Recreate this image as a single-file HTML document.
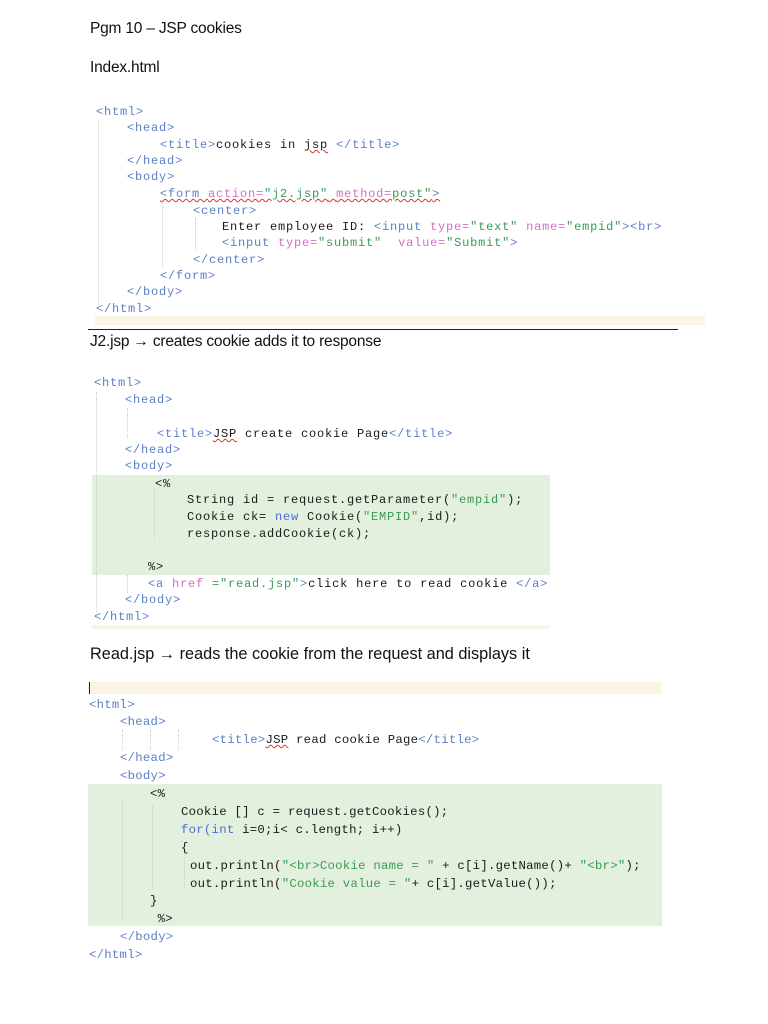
<!DOCTYPE html>
<html><head><meta charset="utf-8"><style>
body{margin:0;width:768px;height:1024px;background:#fff;position:relative;overflow:hidden;font-family:"Liberation Sans",sans-serif}
.h{position:absolute;left:90px;font-size:15.5px;color:#111;white-space:nowrap;letter-spacing:-0.2px}
.c{position:absolute;font-family:"Liberation Mono",monospace;font-size:12px;letter-spacing:0.8px;white-space:pre;color:#1a1a1a;line-height:14px}
.c3{letter-spacing:0.26px;font-size:12.3px}
.t{color:#5b80c8}.a{color:#d36fc6}.s{color:#3a9a55}.k{color:#4b6fd8}
.bx{position:absolute}
.u{text-decoration:underline wavy #d33;text-decoration-thickness:1px}
.g{position:absolute;border-left:1px dotted #ccc}
</style></head><body>
<div class="h" style="top:20px">Pgm 10 – JSP cookies</div>
<div class="h" style="top:59px">Index.html</div>

<div class="g" style="left:98px;top:120px;height:185px"></div>
<div class="g" style="left:162px;top:203px;height:65px"></div>
<div class="g" style="left:195px;top:218px;height:32px"></div>
<div class="c" style="left:96px;top:105px"><span class="t">&lt;html&gt;</span></div>
<div class="c" style="left:127px;top:121px"><span class="t">&lt;head&gt;</span></div>
<div class="c" style="left:160px;top:138px"><span class="t">&lt;title&gt;</span>cookies in <span class="u">jsp</span> <span class="t">&lt;/title&gt;</span></div>
<div class="c" style="left:127px;top:154px"><span class="t">&lt;/head&gt;</span></div>
<div class="c" style="left:127px;top:170px"><span class="t">&lt;body&gt;</span></div>
<div class="c" style="left:160px;top:187px"><span class="u"><span class="t">&lt;form </span><span class="a">action=</span><span class="s">"j2.jsp"</span> <span class="a">method=</span><span class="s">post"</span><span class="t">&gt;</span></span></div>
<div class="c" style="left:193px;top:204px"><span class="t">&lt;center&gt;</span></div>
<div class="c" style="left:222px;top:220px">Enter employee ID: <span class="t">&lt;input </span><span class="a">type=</span><span class="s">"text"</span> <span class="a">name=</span><span class="s">"empid"</span><span class="t">&gt;&lt;br&gt;</span></div>
<div class="c" style="left:222px;top:236px"><span class="t">&lt;input </span><span class="a">type=</span><span class="s">"submit"</span>  <span class="a">value=</span><span class="s">"Submit"</span><span class="t">&gt;</span></div>
<div class="c" style="left:193px;top:253px"><span class="t">&lt;/center&gt;</span></div>
<div class="c" style="left:160px;top:269px"><span class="t">&lt;/form&gt;</span></div>
<div class="c" style="left:127px;top:285px"><span class="t">&lt;/body&gt;</span></div>
<div class="c" style="left:96px;top:302px"><span class="t">&lt;/html&gt;</span></div>
<div class="bx" style="left:95px;top:316px;width:610px;height:9px;background:#fbf5e6"></div>
<div class="bx" style="left:88px;top:329px;width:590px;height:1px;background:#222"></div>

<div class="h" style="top:333px">J2.jsp <b>→</b> creates cookie adds it to response</div>
<div class="bx" style="left:92px;top:475px;width:458px;height:100px;background:#e3f0dd"></div>
<div class="g" style="left:96px;top:392px;height:220px"></div>
<div class="g" style="left:127px;top:408px;height:30px"></div>
<div class="g" style="left:154px;top:490px;height:50px"></div>
<div class="g" style="left:127px;top:575px;height:18px"></div>
<div class="c" style="left:94px;top:376px"><span class="t">&lt;html&gt;</span></div>
<div class="c" style="left:125px;top:393px"><span class="t">&lt;head&gt;</span></div>
<div class="c" style="left:157px;top:427px"><span class="t">&lt;title&gt;</span><span class="u">JSP</span> create cookie Page<span class="t">&lt;/title&gt;</span></div>
<div class="c" style="left:125px;top:443px"><span class="t">&lt;/head&gt;</span></div>
<div class="c" style="left:125px;top:459px"><span class="t">&lt;body&gt;</span></div>
<div class="c" style="left:155px;top:477px">&lt;%</div>
<div class="c" style="left:187px;top:493px">String id = request.getParameter(<span class="s">"empid"</span>);</div>
<div class="c" style="left:187px;top:510px">Cookie ck= <span class="k">new</span> Cookie(<span class="s">"EMPID"</span>,id);</div>
<div class="c" style="left:187px;top:527px">response.addCookie(ck);</div>
<div class="c" style="left:148px;top:560px">%&gt;</div>
<div class="c" style="left:148px;top:577px"><span class="t">&lt;a </span><span class="a">href </span><span class="s">="read.jsp"</span><span class="t">&gt;</span>click here to read cookie <span class="t">&lt;/a&gt;</span></div>
<div class="c" style="left:125px;top:593px"><span class="t">&lt;/body&gt;</span></div>
<div class="c" style="left:94px;top:610px"><span class="t">&lt;/html&gt;</span></div>
<div class="bx" style="left:92px;top:625px;width:458px;height:4px;background:#fbf5e6"></div>

<div class="h" style="top:645px;font-size:16.3px;letter-spacing:0px">Read.jsp <b>→</b> reads the cookie from the request and displays it</div>
<div class="bx" style="left:88px;top:682px;width:574px;height:12px;background:#fbf5e6"></div>
<div class="bx" style="left:89px;top:682px;width:1px;height:12px;background:#222"></div>
<div class="bx" style="left:88px;top:784px;width:574px;height:142px;background:#e3f0dd"></div>
<div class="g" style="left:122px;top:730px;height:20px"></div>
<div class="g" style="left:150px;top:730px;height:20px"></div>
<div class="g" style="left:178px;top:730px;height:20px"></div>
<div class="g" style="left:122px;top:800px;height:120px"></div>
<div class="g" style="left:152px;top:805px;height:85px"></div>
<div class="g" style="left:184px;top:855px;height:35px"></div>
<div class="c c3" style="left:89px;top:698px"><span class="t">&lt;html&gt;</span></div>
<div class="c c3" style="left:120px;top:715px"><span class="t">&lt;head&gt;</span></div>
<div class="c c3" style="left:212px;top:733px"><span class="t">&lt;title&gt;</span><span class="u">JSP</span> read cookie Page<span class="t">&lt;/title&gt;</span></div>
<div class="c c3" style="left:120px;top:751px"><span class="t">&lt;/head&gt;</span></div>
<div class="c c3" style="left:120px;top:769px"><span class="t">&lt;body&gt;</span></div>
<div class="c c3" style="left:150px;top:787px">&lt;%</div>
<div class="c c3" style="left:181px;top:805px">Cookie [] c = request.getCookies();</div>
<div class="c c3" style="left:181px;top:823px"><span class="k">for(int</span> i=0;i&lt; c.length; i++)</div>
<div class="c c3" style="left:181px;top:841px">{</div>
<div class="c c3" style="left:190px;top:859px">out.println(<span class="s">"&lt;br&gt;Cookie name = "</span> + c[i].getName()+ <span class="s">"&lt;br&gt;"</span>);</div>
<div class="c c3" style="left:190px;top:877px">out.println(<span class="s">"Cookie value = "</span>+ c[i].getValue());</div>
<div class="c c3" style="left:150px;top:894px">}</div>
<div class="c c3" style="left:150px;top:912px"> %&gt;</div>
<div class="c c3" style="left:120px;top:930px"><span class="t">&lt;/body&gt;</span></div>
<div class="c c3" style="left:89px;top:948px"><span class="t">&lt;/html&gt;</span></div>
</body></html>
